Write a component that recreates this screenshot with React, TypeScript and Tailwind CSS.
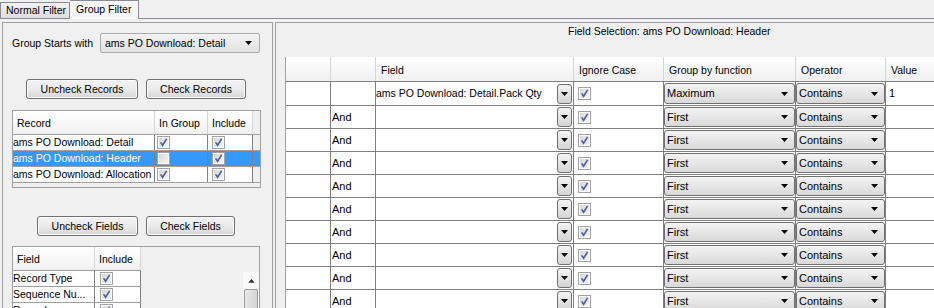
import React from 'react';

const Tri = () => (
  <svg width="7" height="4" viewBox="0 0 7 4" className="block shrink-0">
    <path d="M0 0h7L3.5 4z" fill="#000" />
  </svg>
);

const Check: React.FC<{ checked?: boolean }> = ({ checked = true }) => (
  <div className="relative w-[13px] h-[13px] border border-[#a3a3a3] bg-white shrink-0">
    <div className="absolute inset-[1px] bg-linear-to-br from-[#d8d8d8] to-[#f6f6f6]" />
    {checked && (
      <svg width="11" height="11" viewBox="0 0 11 11" className="absolute left-0 top-0">
        <path d="M2.6 5.4 L4.6 8.2 L8.6 1.8" stroke="#4b5ba8" strokeWidth="1.6" fill="none" />
      </svg>
    )}
  </div>
);

const Button: React.FC<{ label: string; w: string }> = ({ label, w }) => (
  <div
    className={`${w} h-[20px] flex items-center justify-center rounded-[3px] border border-[#707070] bg-linear-to-b from-[#f3f3f3] via-[#ebebeb] to-[#d6d6d6] shadow-[inset_0_0_0_1px_#fbfbfb] text-black`}
  >
    {label}
  </div>
);

const Combo: React.FC<{ text: string }> = ({ text }) => (
  <div className="h-full flex items-center justify-between rounded-[3px] border border-[#707070] bg-linear-to-b from-[#f4f4f4] to-[#d9d9d9] pl-[2px] pr-[6px] text-[11px]">
    <span>{text}</span>
    <Tri />
  </div>
);

const DropBtn = () => (
  <div className="w-[15px] h-[20px] flex items-center justify-center rounded-[3px] border border-[#707070] bg-linear-to-b from-[#f4f4f4] to-[#d4d4d4]">
    <Tri />
  </div>
);

const GRID = 'grid grid-cols-[45px_45px_198px_90px_132px_90px_80px]';
const HEAD_CELL = 'border-r border-[#d5d5d5] flex items-center pl-[5px] pt-[2px]';
const CELL = 'border-r border-[#808080]';

const rows = [
  { and: '', field: 'ams PO Download: Detail.Pack Qty', fn: 'Maximum', value: '1' },
  ...Array.from({ length: 9 }, () => ({ and: 'And', field: '', fn: 'First', value: '' })),
];

const records = [
  { name: 'ams PO Download: Detail', inGroup: true, sel: false },
  { name: 'ams PO Download: Header', inGroup: false, sel: true },
  { name: 'ams PO Download: Allocation', inGroup: true, sel: false },
];

const fields = ['Record Type', 'Sequence Nu...', 'Record'];

export default function App() {
  return (
    <div className="w-[934px] h-[308px] overflow-hidden bg-[#f0f0f0] text-[10.5px] text-black font-['Liberation_Sans',Arial,sans-serif] leading-none whitespace-nowrap">
      {/* tabs */}
      <div className="h-[19px] border-b border-[#898c95] flex items-end">
        <div className="w-[70px] h-[16px] border border-b-0 border-[#898c95] bg-linear-to-b from-[#f3f3f3] to-[#dddddd] flex items-center pl-[5px]">
          Normal Filter
        </div>
        <div className="w-[69px] h-[19px] -mb-[1px] border border-b-0 border-l-0 border-[#898c95] bg-[#f7f7f7] flex items-center pl-[6px] pb-[2px]">
          Group Filter
        </div>
      </div>

      <div className="flex pt-[3px] gap-[2px] pl-[2px]">
        {/* left panel */}
        <div className="w-[271px] h-[300px] border border-[#a0a0a0] shrink-0 pl-[9px]">
          <div className="flex items-center mt-[10px] h-[20px]">
            <span className="w-[88px]">Group Starts with</span>
            <div className="w-[160px] h-[20px] flex items-center justify-between rounded-[2px] border border-[#acacac] bg-linear-to-b from-[#f3f3f3] to-[#e2e2e2] pl-[4px] pr-[7px]">
              <span>ams PO Download: Detail</span>
              <Tri />
            </div>
          </div>

          <div className="flex gap-[8px] mt-[26px] ml-[14px]">
            <Button label="Uncheck Records" w="w-[112px]" />
            <Button label="Check Records" w="w-[100px]" />
          </div>

          <div className="mt-[11px] w-[249px] h-[78px] border border-[#a0a0a0] bg-[#f0f0f0]">
            <div className="flex h-[24px] border-b border-[#a0a0a0]">
              <div className="w-[142px] flex items-center pl-[4px] pt-[2px] border-r border-[#d5d5d5] bg-linear-to-b from-white to-[#f1f1f1]">Record</div>
              <div className="w-[53px] flex items-center pl-[4px] pt-[2px] border-r border-[#d5d5d5] bg-linear-to-b from-white to-[#f1f1f1]">In Group</div>
              <div className="w-[45px] flex items-center pl-[4px] pt-[2px] border-r border-[#d5d5d5] bg-linear-to-b from-white to-[#f1f1f1]">Include</div>
            </div>
            {records.map((r) => (
              <div
                key={r.name}
                className={`flex h-[16px] border-b border-[#a0a0a0] ${r.sel ? 'bg-[#3399ff] text-white' : ''}`}
              >
                <div className={`w-[142px] flex items-center overflow-hidden border-r border-[#808080] ${r.sel ? '' : 'bg-white'}`}>{r.name}</div>
                <div className={`w-[53px] flex items-center pl-[2px] border-r border-[#808080] ${r.sel ? '' : 'bg-white'}`}>
                  <Check checked={r.inGroup} />
                </div>
                <div className={`w-[45px] flex items-center pl-[4px] border-r border-[#808080] ${r.sel ? '' : 'bg-white'}`}>
                  <Check />
                </div>
              </div>
            ))}
          </div>

          <div className="flex gap-[8px] mt-[28px] ml-[25px]">
            <Button label="Uncheck Fields" w="w-[101px]" />
            <Button label="Check Fields" w="w-[89px]" />
          </div>

          <div className="mt-[10px] w-[248px] h-[80px] border border-[#a0a0a0] bg-[#f0f0f0] flex">
            <div className="w-[230px]">
              <div className="flex h-[24px] border-b border-[#a0a0a0] w-[128px]">
                <div className="w-[82px] flex items-center pl-[4px] pt-[2px] border-r border-[#d5d5d5] bg-linear-to-b from-white to-[#f1f1f1]">Field</div>
                <div className="w-[46px] flex items-center pl-[4px] pt-[2px] border-r border-[#d5d5d5] bg-linear-to-b from-white to-[#f1f1f1]">Include</div>
              </div>
              {fields.map((f) => (
                <div key={f} className="flex h-[16px] w-[128px] border-b border-[#a0a0a0]">
                  <div className="w-[82px] flex items-center bg-white border-r border-[#808080] overflow-hidden">{f}</div>
                  <div className="w-[46px] flex items-center pl-[5px] bg-white border-r border-[#808080]">
                    <Check />
                  </div>
                </div>
              ))}
            </div>
            <div className="w-[16px] mt-[25px] bg-[#f9f9f9] flex flex-col items-center">
              <svg width="7" height="4" viewBox="0 0 7 4" className="mt-[7px]">
                <path d="M0 4h7L3.5 0z" fill="#333" />
              </svg>
              <div className="mt-[6px] w-[14px] h-[40px] rounded-[2px] border border-[#9a9a9a] bg-linear-to-r from-[#e8e8e8] to-[#d4d4d4]" />
            </div>
          </div>
        </div>

        {/* right panel */}
        <div className="flex-1 h-[300px] border-l border-t border-[#a0a0a0]">
          <div className="h-[34px] pl-[292px] pt-[3px]">Field Selection: ams PO Download: Header</div>
          <div className="ml-[9px] border-l border-[#a0a0a0]">
            <div className={`${GRID} h-[25px] border-b border-[#808080] bg-linear-to-b from-white to-[#f0f0f0]`}>
              <div className={HEAD_CELL} />
              <div className={HEAD_CELL} />
              <div className={HEAD_CELL}>Field</div>
              <div className={HEAD_CELL}>Ignore Case</div>
              <div className={HEAD_CELL}>Group by function</div>
              <div className={HEAD_CELL}>Operator</div>
              <div className={HEAD_CELL}>Value</div>
            </div>
            {rows.map((r, i) => (
              <div key={i} className={`${GRID} ${i === 0 ? 'h-[24px]' : 'h-[23px]'} border-b border-[#808080] bg-white`}>
                <div className={CELL} />
                <div className={`${CELL} flex items-center pl-[1px] text-[11px]`}>{r.and}</div>
                <div className={`${CELL} flex items-center justify-between pr-[1px]`}>
                  <span>{r.field}</span>
                  <DropBtn />
                </div>
                <div className={`${CELL} flex items-center pl-[4px]`}>
                  <Check />
                </div>
                <div className={`${CELL} py-[1px]`}>
                  <Combo text={r.fn} />
                </div>
                <div className={`${CELL} py-[1px]`}>
                  <Combo text="Contains" />
                </div>
                <div className="flex items-center pl-[3px] text-[11px]">{r.value}</div>
              </div>
            ))}
          </div>
        </div>
      </div>
    </div>
  );
}
